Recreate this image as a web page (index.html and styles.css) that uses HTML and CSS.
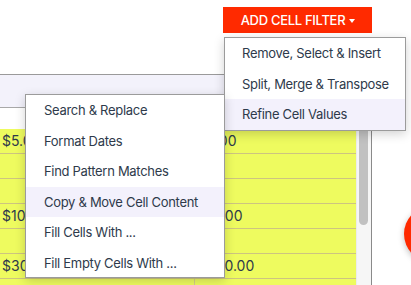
FILE: index.html
```html
<!DOCTYPE html>
<html>
<head>
<meta charset="utf-8">
<link rel="stylesheet" href="styles.css">
</head>
<body>
<div class="page">
  <div class="toolbar">
    <button class="add-btn">ADD CELL FILTER <span class="caret"></span></button>
  </div>
  <div class="table">
    <div class="grid">
      <div class="head"></div>
      <div class="sub"></div>
      <div class="rows">
        <div class="row"><div class="cell">$5.00</div><div class="cell">$5.00</div></div>
        <div class="row"><div class="cell"></div><div class="cell"></div></div>
        <div class="row"><div class="cell"></div><div class="cell"></div></div>
        <div class="row"><div class="cell">$10.00</div><div class="cell">$10.00</div></div>
        <div class="row"><div class="cell"></div><div class="cell"></div></div>
        <div class="row"><div class="cell">$30.00</div><div class="cell">$300.00</div></div>
        <div class="row"><div class="cell"></div><div class="cell"></div></div>
      </div>
    </div>
    <div class="scrollbar"><div class="thumb"></div></div>
  </div>

  <ul class="menu menu-main">
    <li>Remove, Select &amp; Insert</li>
    <li>Split, Merge &amp; Transpose</li>
    <li class="active">Refine Cell Values</li>
  </ul>

  <ul class="menu menu-sub">
    <li>Search &amp; Replace</li>
    <li>Format Dates</li>
    <li>Find Pattern Matches</li>
    <li class="active">Copy &amp; Move Cell Content</li>
    <li>Fill Cells With ...</li>
    <li>Fill Empty Cells With ...</li>
  </ul>

  <div class="fab"></div>
</div>
</body>
</html>
```

FILE: styles.css
```css
* { box-sizing: border-box; }
html, body {
  margin: 0;
  padding: 0;
  background: #ffffff;
  overflow: hidden;
}
body {
  font-family: Inter, "Noto Sans", "Liberation Sans", sans-serif;
  color: #2e3a4b;
  width: 411px;
  height: 285px;
}
.page {
  position: relative;
  width: 411px;
  height: 285px;
  overflow: hidden;
}
.toolbar {
  width: 372px;
  height: 74px;
  padding-top: 7px;
  display: flex;
  justify-content: flex-end;
  align-items: flex-start;
}
.add-btn {
  width: 149px;
  height: 26px;
  border: 0;
  background: #ff2a00;
  color: #ffffff;
  font-family: Inter, "Noto Sans", "Liberation Sans", sans-serif;
  font-size: 13px;
  font-weight: 500;
  letter-spacing: -0.3px;
  padding: 0 0 0 1px;
  display: flex;
  align-items: center;
  justify-content: center;
  gap: 4px;
}
.caret {
  width: 0;
  height: 0;
  border-left: 3.5px solid transparent;
  border-right: 3.5px solid transparent;
  border-top: 4px solid #ffffff;
  margin-top: 1px;
}
.table {
  width: 372px;
  height: 211px;
  border-top: 1px solid #9a9a9a;
  border-right: 1px solid #8a8a8a;
  display: flex;
  overflow: hidden;
}
.grid {
  flex: 1;
  display: flex;
  flex-direction: column;
  overflow: hidden;
}
.head {
  flex-shrink: 0;
  height: 33px;
  background: #f3f2fb;
  border-bottom: 1px solid #a8a8a8;
}
.sub {
  flex-shrink: 0;
  height: 21px;
  background: #ffffff;
}
.rows {
  flex-shrink: 0;
  display: flex;
  flex-direction: column;
}
.row {
  flex-shrink: 0;
  display: flex;
  height: 25px;
  background: #eefb5f;
  border-bottom: 1px solid #cdc480;
}
.cell {
  font-family: Inter, "Noto Sans", "Liberation Sans", sans-serif;
  font-size: 14px;
  color: #2e3a4b;
  padding: 3px 0 0 2px;
  line-height: 17px;
  white-space: nowrap;
  overflow: hidden;
}
.cell:first-child {
  width: 195px;
  border-right: 1px solid #d6cf86;
}
.cell:last-child {
  flex: 1;
  padding-left: 3px;
}
.scrollbar {
  width: 15px;
  flex-shrink: 0;
  background: #f6f6f6;
  border-left: 1px solid #ececec;
  padding: 0 3px 0 2px;
}
.thumb {
  height: 150px;
  background: #c1c1c1;
  border-radius: 0 0 5px 5px;
}
.menu {
  position: absolute;
  margin: 0;
  padding: 0;
  list-style: none;
  background: #ffffff;
  border: 1px solid #9b9b9b;
  box-shadow: 0 3px 10px rgba(0, 0, 0, 0.18);
  font-size: 13px;
  letter-spacing: -0.3px;
  color: #2e3a4b;
}
.menu li {
  height: 30.5px;
  line-height: 30px;
  white-space: nowrap;
}
.menu li.active {
  background: #f3f1fc;
}
.menu-main {
  left: 224px;
  top: 37px;
  width: 182px;
  height: 94px;
}
.menu-main li {
  padding-left: 17px;
}
.menu-sub {
  left: 25px;
  top: 94px;
  width: 200px;
  height: 184px;
}
.menu-sub li {
  padding-left: 18px;
}
.fab {
  position: absolute;
  left: 404px;
  top: 206px;
  width: 56px;
  height: 56px;
  border-radius: 50%;
  background: #ff2a00;
  box-shadow: 0 2px 6px rgba(0, 0, 0, 0.25);
}
```
